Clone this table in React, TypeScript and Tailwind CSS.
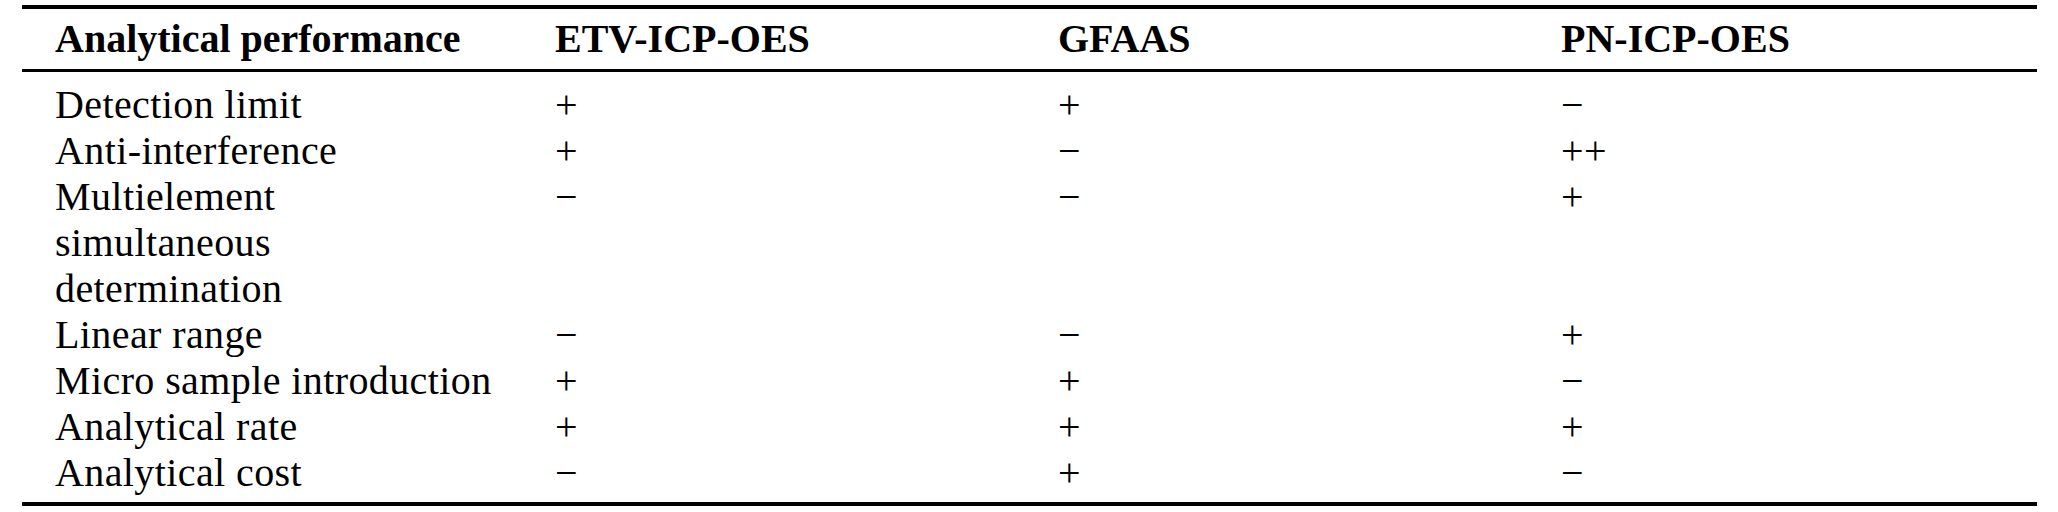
const HEAD = ['Analytical performance', 'ETV-ICP-OES', 'GFAAS', 'PN-ICP-OES'];

const ROWS: { label: string[]; values: string[] }[] = [
  { label: ['Detection limit'], values: ['+', '+', '−'] },
  { label: ['Anti-interference'], values: ['+', '−', '++'] },
  { label: ['Multielement', 'simultaneous', 'determination'], values: ['−', '−', '+'] },
  { label: ['Linear range'], values: ['−', '−', '+'] },
  { label: ['Micro sample introduction'], values: ['+', '+', '−'] },
  { label: ['Analytical rate'], values: ['+', '+', '+'] },
  { label: ['Analytical cost'], values: ['−', '+', '−'] },
];

const GRID = 'grid grid-cols-[500px_503px_503px_1fr] pl-[33px]';

export default function App() {
  return (
    <div
      className="w-[2058px] h-[512px] bg-white text-black pt-[5px] pl-[22px]"
      style={{ fontFamily: '"Liberation Serif", "Times New Roman", serif' }}
    >
      <div className="w-[2015px] border-t-4 border-b-4 border-black">
        <div className={`${GRID} h-[63px] items-center border-b-[3px] border-black text-[40px] font-bold leading-none`}>
          {HEAD.map(h => (
            <div key={h} className="whitespace-nowrap">{h}</div>
          ))}
        </div>

        <div className="pt-[10px] pb-[6px] text-[40px] leading-[46px] tracking-[0.4px]">
          {ROWS.map(row => (
            <div key={row.label.join(' ')} className={GRID}>
              <div className="whitespace-nowrap">
                {row.label.map(line => (
                  <div key={line}>{line}</div>
                ))}
              </div>
              {row.values.map((v, i) => (
                <div key={i}>{v}</div>
              ))}
            </div>
          ))}
        </div>
      </div>
    </div>
  );
}
